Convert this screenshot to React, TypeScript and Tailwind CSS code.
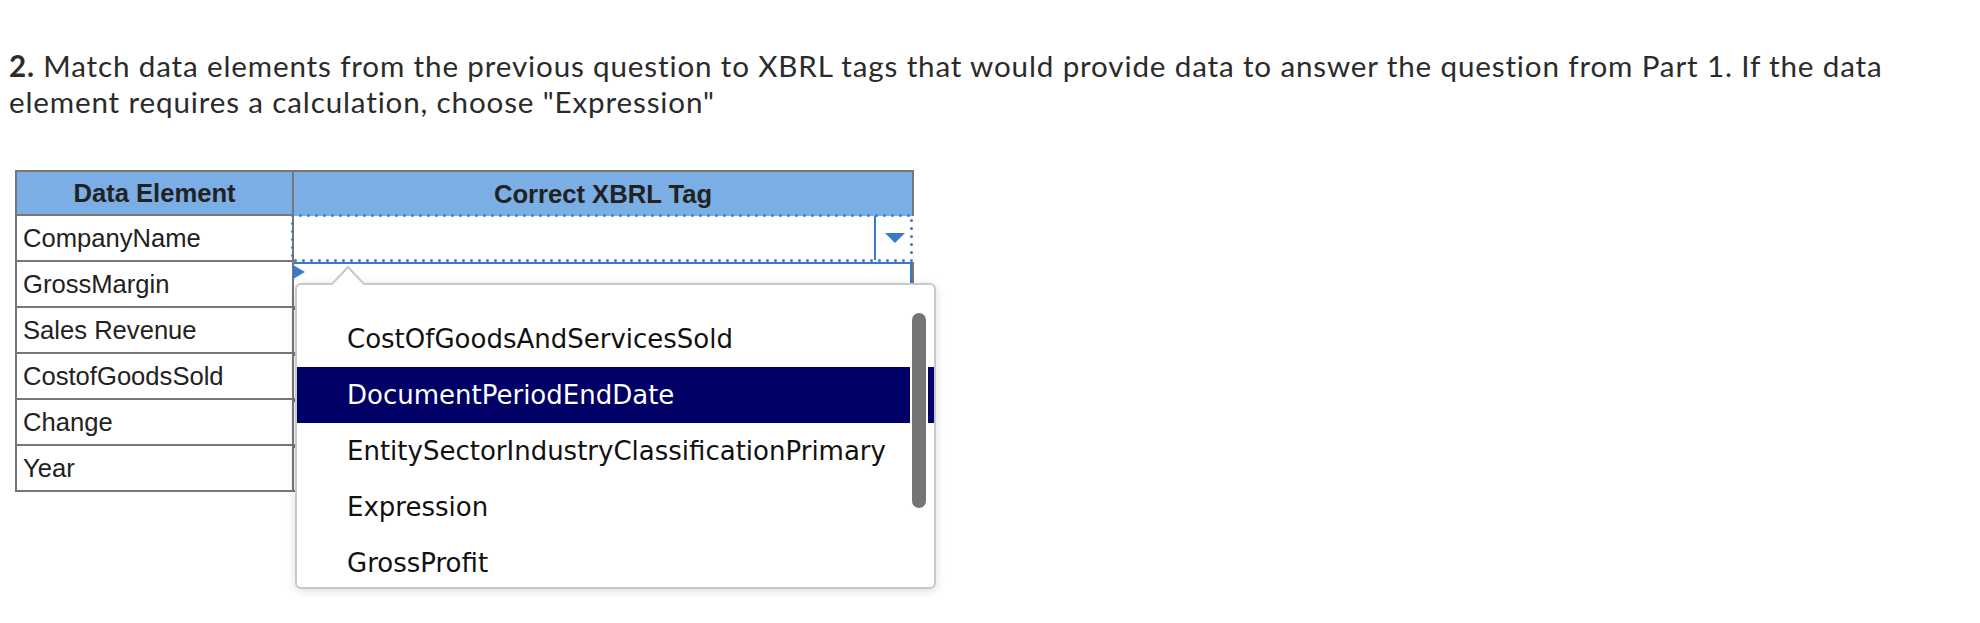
import React from 'react';

const ROWS = ['CompanyName', 'GrossMargin', 'Sales Revenue', 'CostofGoodsSold', 'Change', 'Year'];

const OPTIONS = [
  'CostOfGoodsAndServicesSold',
  'DocumentPeriodEndDate',
  'EntitySectorIndustryClassificationPrimary',
  'Expression',
  'GrossProfit',
];

const SELECTED = 'DocumentPeriodEndDate';

function Row1Tag() {
  return (
    <div className="relative h-[46px] bg-white">
      {/* focus ring, dotted */}
      <svg className="absolute left-[-3px] top-[-2px] pointer-events-none" width="623" height="48">
        <rect
          x="1.5"
          y="1.5"
          width="619"
          height="45"
          fill="none"
          stroke="#3a79c8"
          strokeWidth="3"
          strokeLinecap="round"
          strokeDasharray="0 8"
        />
      </svg>
      <div className="flex h-[44px] justify-end">
        <div className="flex w-[40px] items-center justify-center border-l-2 border-[#3a79c8]">
          <div className="h-0 w-0 border-x-[10px] border-t-[10px] border-x-transparent border-t-[#3a79c8]" />
        </div>
      </div>
    </div>
  );
}

function TagCell({ active }: { active?: boolean }) {
  return (
    <div className="relative h-[46px] border-r-2 border-b-2 border-[#777]">
      <div className="h-full border-t-2 border-r-2 border-[#3a79c8]" />
      {active && (
        <div className="absolute left-[-1px] top-[3px] h-0 w-0 border-y-[7px] border-l-[12px] border-y-transparent border-l-[#3a79c8]" />
      )}
    </div>
  );
}

function Dropdown() {
  return (
    <div className="absolute left-[295px] top-[283px] h-[306px] w-[641px] rounded-[6px] border-2 border-[#c8c8c8] bg-white shadow-[0_2px_10px_rgba(0,0,0,0.14)]">
      <svg className="absolute left-[35px] top-[-19px]" width="33" height="22">
        <polygon points="0,18 16,1 32,18 32,21 0,21" fill="#ffffff" />
        <polyline points="0,18 16,1 32,18" fill="none" stroke="#c8c8c8" strokeWidth="2" />
      </svg>
      <div className="h-full overflow-hidden rounded-[4px] pt-[26px]">
        {OPTIONS.map((opt) => (
          <div
            key={opt}
            className={`flex h-[56px] items-center pl-[50px] text-[26px] font-['DejaVu_Sans',Verdana,sans-serif] ${
              opt === SELECTED ? 'bg-[#000066] text-white' : 'text-[#111]'
            }`}
          >
            {opt}
          </div>
        ))}
      </div>
      <div className="absolute left-[613px] top-[26px] h-[199px] w-[18px] rounded-full border-2 border-white bg-[#757575]" />
    </div>
  );
}

export default function App() {
  return (
    <div className="relative h-[623px] w-[1980px] overflow-hidden bg-white font-['Liberation_Sans',Arial,sans-serif]">
      <div className="pl-[9px] pt-[48px] text-[29.6px] leading-[36px] tracking-[0.85px] text-[#2b2b2b] font-['Lato',sans-serif]">
        <b>2.</b> Match data elements from the previous question to XBRL tags that would provide data to answer the
        question from Part 1. If the data
        <br />
        element requires a calculation, choose "Expression"
      </div>

      <div className="ml-[15px] mt-[50px] flex w-[899px] text-[25.6px] text-[#222]">
        <div className="w-[279px]">
          <div className="flex h-[46px] items-center justify-center border-2 border-[#777] bg-[#7aaee4] font-bold">
            Data Element
          </div>
          {ROWS.map((r) => (
            <div key={r} className="flex h-[46px] items-center border-x-2 border-b-2 border-[#777] pl-[6px]">
              {r}
            </div>
          ))}
        </div>
        <div className="w-[620px]">
          <div className="flex h-[46px] items-center justify-center border-t-2 border-r-2 border-[#777] bg-[#7aaee4] font-bold">
            Correct XBRL Tag
          </div>
          <Row1Tag />
          {ROWS.slice(1).map((r, i) => (
            <TagCell key={r} active={i === 0} />
          ))}
        </div>
      </div>

      <Dropdown />
    </div>
  );
}
